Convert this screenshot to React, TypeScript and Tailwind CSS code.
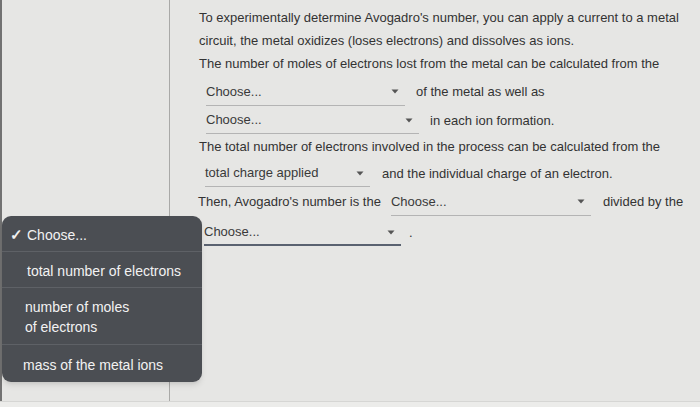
import React from 'react';

const font = { fontFamily: '"Liberation Sans", Arial, sans-serif' };

function Caret() {
  return (
    <svg width="8" height="5" viewBox="0 0 8 5" className="shrink-0">
      <path d="M0.5 0.5 L7.5 0.5 L4 4.5 Z" fill="#555" />
    </svg>
  );
}

function Select({
  label,
  width,
  focused = false,
}: {
  label: string;
  width: string;
  focused?: boolean;
}) {
  return (
    <div
      className={`flex h-full items-center justify-between pr-[6px] ${width} ${
        focused ? 'border-b-2 border-[#5a6270]' : 'border-b border-[#b4b4b4]'
      }`}
    >
      <span className="text-[#3a3a3a]">{label}</span>
      <Caret />
    </div>
  );
}

const menuItems = [
  { label: 'total number of electrons', h: 'h-[36px]', pl: 'pl-[25px]' },
  { label: 'number of moles\nof electrons', h: 'h-[57px]', pl: 'pl-[23px]' },
  { label: 'mass of the metal ions', h: 'h-[37px]', pl: 'pl-[21px]' },
];

export default function App() {
  return (
    <div
      className="relative flex h-[407px] w-[700px] overflow-hidden bg-[#e6e6e4] text-[13px] text-[#333333]"
      style={font}
    >
      {/* left rail */}
      <div className="w-[2px] shrink-0 bg-[#727272]" />
      <div className="w-[168px] shrink-0 border-r border-[#a9a9a7]" />

      {/* question body */}
      <div className="flex flex-1 flex-col pl-[29px] pt-[6px]">
        <p className="h-[23px] leading-[23px]">
          To experimentally determine Avogadro's number, you can apply a current to a metal
        </p>
        <p className="h-[23px] leading-[23px]">
          circuit, the metal oxidizes (loses electrons) and dissolves as ions.
        </p>
        <p className="h-[23px] leading-[23px]">
          The number of moles of electrons lost from the metal can be calculated from the
        </p>

        <div className="mt-[3px] flex h-[28px] items-center">
          <div className="ml-[7px] h-full">
            <Select label="Choose..." width="w-[199px]" />
          </div>
          <span className="ml-[11px]">of the metal as well as</span>
        </div>

        <div className="mt-[1px] flex h-[27px] items-center">
          <div className="ml-[7px] h-full">
            <Select label="Choose..." width="w-[213px]" />
          </div>
          <span className="ml-[11px]">in each ion formation.</span>
        </div>

        <p className="mt-[1px] h-[23px] leading-[23px]">
          The total number of electrons involved in the process can be calculated from the
        </p>

        <div className="mt-[2px] flex h-[27px] items-center">
          <div className="ml-[6px] h-full">
            <Select label="total charge applied" width="w-[165px]" />
          </div>
          <span className="ml-[12px]">and the individual charge of an electron.</span>
        </div>

        <div className="mt-[1px] flex h-[28px] items-center">
          <span className="-ml-[1px]">Then, Avogadro's number is the</span>
          <div className="ml-[10px] h-full">
            <Select label="Choose..." width="w-[200px]" />
          </div>
          <span className="ml-[12px]">divided by the</span>
        </div>

        <div className="mt-[4px] flex h-[26px] items-center">
          <div className="ml-[5px] h-full">
            <Select label="Choose..." width="w-[197px]" focused />
          </div>
          <span className="ml-[8px]">.</span>
        </div>
      </div>

      {/* bottom band */}
      <div className="absolute bottom-0 left-0 h-[6px] w-full border-t border-[#d6d6d4] bg-[#ececea]" />

      {/* open select menu */}
      <div className="absolute left-[2px] top-[216px] w-[200px] overflow-hidden rounded-[9px] bg-[#4b4e53] text-[14px] text-[#f2f2f2] shadow-md">
        <div className="flex h-[36px] items-center border-b border-[#5e6166] pl-[8px] pt-[3px]">
          <span className="mr-[4px] text-[15px] font-bold">✓</span>
          <span>Choose...</span>
        </div>
        {menuItems.map((item, i) => (
          <div
            key={item.label}
            className={`flex ${item.h} ${item.pl} items-center pt-[2px] leading-[20px] whitespace-pre-line ${
              i < menuItems.length - 1 ? 'border-b border-[#5e6166]' : ''
            }`}
          >
            {item.label}
          </div>
        ))}
      </div>
    </div>
  );
}
